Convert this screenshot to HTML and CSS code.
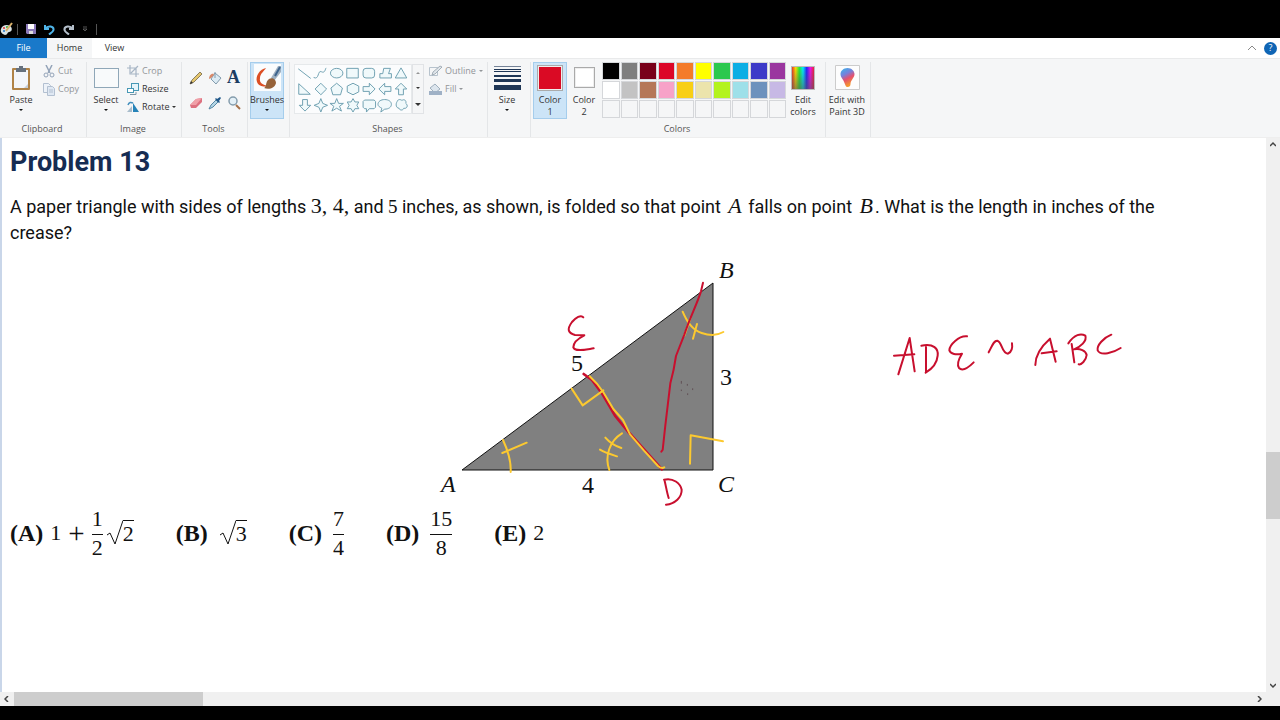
FILE: index.html
```html
<!DOCTYPE html>
<html lang="en">
<head>
    <meta charset="UTF-8">
    <meta name="viewport" content="width=device-width, initial-scale=1.0">
    <title>Problem 13 - Paint</title>
    <link rel="stylesheet" href="styles.css">
</head>
<body>
<div class="app">
    <header class="title-bar">
        <svg class="app-icon" width="13" height="14" viewBox="0 0 13 14"><path d="M1 7C2 3 7 2 10 4c3 2 2 6-1 6-2 0-1 3-4 3-3-1-5-3-4-6z" fill="#d9e2e4"/><circle cx="4" cy="6" r="1" fill="#d33"/><circle cx="7" cy="5" r="1" fill="#3a3"/><circle cx="4" cy="9" r="1" fill="#27c"/><path d="M6 9l6-8" stroke="#d8b06a" stroke-width="2"/></svg>
        <span class="bar-line"></span>
        <button class="quick" aria-label="Save"><svg width="10" height="10" viewBox="0 0 10 10"><path d="M0 0h10v10H1L0 9z" fill="#8a78b8"/><path d="M2 0h6v5H2z" fill="#fff"/><path d="M3 7h4v3H3z" fill="#ddd"/></svg></button>
        <button class="quick" aria-label="Undo"><svg width="11" height="11" viewBox="0 0 11 11"><path d="M1 1v4h4M1 5C4 1 10 2 9.500 6 9 8 7 9 5 10.500" fill="none" stroke="#4fb4e8" stroke-width="2"/></svg></button>
        <button class="quick" aria-label="Redo"><svg width="11" height="11" viewBox="0 0 11 11"><path d="M10 1v4H6M10 5C7 1 1 2 1.500 6 2 8 4 9 6 10.500" fill="none" stroke="#b4bfca" stroke-width="2"/></svg></button>
        <button class="quick" aria-label="Customize toolbar"><svg width="6" height="6" viewBox="0 0 6 6"><path d="M1 1h4M1 3h4L3 5z" fill="none" stroke="#777" stroke-width=".7"/></svg></button>
        <span class="bar-line"></span>
    </header>

    <nav class="tabs">
        <button class="tab tab-file">File</button>
        <button class="tab tab-active">Home</button>
        <button class="tab">View</button>
        <button class="collapse" aria-label="Collapse ribbon"><svg width="10" height="6" viewBox="0 0 10 6"><path d="M1 5l4-4 4 4" fill="none" stroke="#888"/></svg></button>
        <button class="help" aria-label="Help">?</button>
    </nav>

    <section class="ribbon">
        <div class="group group-clipboard">
            <div class="group-body">
                <button class="big">
                    <span class="big-icon"><svg width="20" height="26" viewBox="0 0 20 26"><rect x="1" y="3" width="18" height="22" rx="1" fill="#b08347"/><rect x="3" y="5" width="14" height="18" fill="#f3f6fa"/><path d="M5 7V3h3V1h4v2h3v4z" fill="#66717d"/><path d="M13 23l4-4v4z" fill="#c6ced8"/></svg></span>
                    <span>Paste</span><i class="caret"></i>
                </button>
                <div class="stack">
                    <button class="small off"><svg width="12" height="13" viewBox="0 0 12 13"><path d="M3 0l4 8M9 0L5 8" fill="none" stroke="#93a3b8" stroke-width="1.500"/><circle cx="3" cy="10" r="2" fill="none" stroke="#93a3b8"/><circle cx="9" cy="10" r="2" fill="none" stroke="#93a3b8"/></svg>Cut</button>
                    <button class="small off"><svg width="12" height="13" viewBox="0 0 12 13"><path d="M.5.5h5l2 2v7h-7z" fill="#edf2f8" stroke="#b3c0d1"/><path d="M4.500 3.500h5l2 2v7h-7z" fill="#dfe8f3" stroke="#b3c0d1"/><path d="M6 7h4M6 9h4" stroke="#b3c0d1"/></svg>Copy</button>
                </div>
            </div>
            <div class="group-label">Clipboard</div>
        </div>

        <div class="group group-image">
            <div class="group-body">
                <button class="big">
                    <span class="big-icon"><svg width="25" height="20" viewBox="0 0 25 20"><rect x=".5" y=".5" width="24" height="19" fill="#f8fafb" stroke="#8fa7b8"/></svg></span>
                    <span>Select</span><i class="caret"></i>
                </button>
                <div class="stack">
                    <button class="small off"><svg width="12" height="12" viewBox="0 0 12 12"><path d="M3 0v9h9M0 3h9v9M4 8l7-7" fill="none" stroke="#a7b5c5" stroke-width="1.200"/></svg>Crop</button>
                    <button class="small"><svg width="12" height="12" viewBox="0 0 12 12"><rect x="4.500" y=".5" width="7" height="7" fill="#e6f4fa" stroke="#4798b5"/><rect x=".5" y="5.500" width="6" height="4" fill="#fff" stroke="#4798b5"/><path d="M3 11.500h6V9" fill="none" stroke="#7e98a8"/></svg>Resize</button>
                    <button class="small"><svg width="12" height="12" viewBox="0 0 12 12"><path d="M0 11l5-6v6z" fill="#a9bdcc"/><path d="M6 2l6 9H6z" fill="#2683b8"/><path d="M1 4c1-3 3-3 5-2" fill="none" stroke="#448fbd" stroke-width="1.500"/></svg>Rotate <i class="caret"></i></button>
                </div>
            </div>
            <div class="group-label">Image</div>
        </div>

        <div class="group group-tools">
            <div class="group-body">
                <div class="tool-grid">
                    <button aria-label="Pencil"><svg width="14" height="14" viewBox="0 0 14 14"><path d="M1 13l2-4 8-8 2 2-8 8z" fill="#e4c66d" stroke="#746647" stroke-width=".8"/><path d="M1 13l1-3 2 2z" fill="#333"/></svg></button>
                    <button aria-label="Fill with color"><svg width="14" height="14" viewBox="0 0 14 14"><path d="M7 2l6 5-5 6-5-5z" fill="#dcebf4" stroke="#829bad"/><path d="M7 7V1" stroke="#829bad"/><path d="M6 3C3 2 1 5 1 8l2-1 2-2z" fill="#d9896a"/></svg></button>
                    <button class="tool-text" aria-label="Text">A</button>
                    <button aria-label="Eraser"><svg width="14" height="14" viewBox="0 0 14 14"><path d="M1 9l6-6 6-1v4l-6 6H2z" fill="#dd7180"/><path d="M1 9l6-6 6-1-6 7z" fill="#f0a0a8"/></svg></button>
                    <button aria-label="Color picker"><svg width="14" height="14" viewBox="0 0 14 14"><path d="M1 13l2-4 5-5 2 2-5 5z" fill="#b4d5e5" stroke="#5688a5"/><path d="M7 3l4 4 1-1-1-1 2-3-1-1-3 2-1-1z" fill="#21588a"/></svg></button>
                    <button aria-label="Magnifier"><svg width="14" height="14" viewBox="0 0 14 14"><circle cx="6" cy="5" r="4" fill="#e4f0f7" stroke="#849cac" stroke-width="1.500"/><path d="M9 9l4 4" stroke="#a5714a" stroke-width="2"/></svg></button>
                </div>
            </div>
            <div class="group-label">Tools</div>
        </div>

        <div class="group group-brushes">
            <div class="group-body">
                <button class="big picked">
                    <span class="big-icon"><svg width="27" height="27" viewBox="0 0 27 27"><path d="M0 0h27v27H0z" fill="#fafcfd"/><path d="M12 4C6 5 1 12 3 18c2 5 8 5 11 4-5-1-9-3-8-8 0-4 4-7 6-10z" fill="#dc4f25"/><path d="M17 14L24 2h3v6l-7 9z" fill="#9eb0c1"/><path d="M21 12l5-9" stroke="#3d648d" stroke-width="2"/><path d="M10 24c3-1 1-6 5-9 3-2 7 0 7 4-1 5-7 7-12 5z" fill="#96633a"/></svg></span>
                    <span>Brushes</span><i class="caret"></i>
                </button>
            </div>
        </div>

        <div class="group group-shapes">
            <div class="group-body">
                <svg class="gallery" width="118" height="50" viewBox="0 0 118 50" role="img" aria-label="Shapes gallery">
                    <g fill="#f0f9fb" stroke="#6d9fb0">
                        <path d="M2 4l13 10"/>
                        <path d="M18 13c6 3 4-8 8-6s4-3 5-4" fill="none"/>
                        <ellipse cx="42" cy="8.500" rx="6.500" ry="5"/>
                        <path d="M52.500 3.500h12v10h-12z"/>
                        <rect x="69.500" y="3.500" width="12" height="10" rx="3"/>
                        <path d="M87 13.500V9h3l1-5.500h7L96 9h3v4.500z"/>
                        <path d="M109 3l6 10.500h-12z"/>
                        <path d="M2.500 19.500v11h12z"/>
                        <path d="M25.500 19l6 6-6 6-6-6z"/>
                        <path d="M42 19l6 5-2 7h-8l-2-7z"/>
                        <path d="M59 19l6 3v6l-6 3-6-3v-6z"/>
                        <path d="M69.500 22.500H76V19l6 6-6 6v-3.500h-6.500z"/>
                        <path d="M98.500 22.500H92V19l-6 6 6 6v-3.500h6.500z"/>
                        <path d="M106.500 31v-6H103l6-6 6 6h-3.500v6z"/>
                        <path d="M6.500 36v6H3l6 6 6-6h-3.500v-6z"/>
                        <path d="M25.500 35l2 5 5 2-5 2-2 5-2-5-5-2 5-2z"/>
                        <path d="M42 35l2 5h5l-4 3 2 5-5-3-5 3 2-5-4-3h5z"/>
                        <path d="M59 35l2 3.500h4L63 42l2 3.500h-4L59 49l-2-3.500h-4l2-3.500-2-3.500h4z"/>
                        <path d="M71 36.500h10l1.500 1.500v6L81 45.500h-5L73 49v-3.500h-2L69.500 44v-6z"/>
                        <path d="M89 45l-1 4 4-3c4 0 7-2 7-5s-3-5-7-5-7 2-7 5c0 2 2 3 4 4z"/>
                        <path d="M105 38c1-3 4-2 5-1 2-2 5 0 4 3 3 2 1 6-2 5-1 3-5 2-5 0-3 0-4-4-2-7z"/>
                    </g>
                </svg>
                <div class="gallery-scroll">
                    <button aria-label="Previous row"><i class="caret caret-up"></i></button>
                    <button aria-label="Next row"><i class="caret"></i></button>
                    <button aria-label="More shapes"><i class="caret caret-more"></i></button>
                </div>
                <div class="stack">
                    <button class="small off"><svg width="13" height="12" viewBox="0 0 13 12"><path d="M.5 2.500h8v8h-8z" fill="none" stroke="#b7c3cd"/><path d="M3 10l1-3 7-6 2 1-7 7z" fill="#dfe5ea" stroke="#93a0aa" stroke-width=".8"/></svg>Outline <i class="caret"></i></button>
                    <button class="small off"><svg width="13" height="12" viewBox="0 0 13 12"><path d="M1 5l5-4 5 5-5 4z" fill="#dce5ed" stroke="#9fafbd"/><path d="M0 8h13v4H0z" fill="#9fb1c6"/></svg>Fill <i class="caret"></i></button>
                </div>
            </div>
            <div class="group-label">Shapes</div>
        </div>

        <div class="group group-size">
            <div class="group-body">
                <button class="big">
                    <span class="big-icon"><svg width="27" height="24" viewBox="0 0 27 24" fill="#1e3656"><path d="M0 0h27v1H0z" opacity=".6"/><path d="M0 3h27v1H0zM0 5h27v1H0zM0 9h27v2H0zM0 13h27v3H0zM0 19h27v5H0z"/></svg></span>
                    <span>Size</span><i class="caret"></i>
                </button>
            </div>
        </div>

        <div class="group group-colors">
            <div class="group-body">
                <button class="big picked"><span class="big-icon"><span class="swatch swatch-one"></span></span><span>Color<br>1</span></button>
                <button class="big"><span class="big-icon"><span class="swatch swatch-two"></span></span><span>Color<br>2</span></button>
                <div class="palette">
                    <button class="black" aria-label="Black"></button>
                    <button class="gray" aria-label="Gray"></button>
                    <button class="dark-red" aria-label="Dark red"></button>
                    <button class="red" aria-label="Red"></button>
                    <button class="orange" aria-label="Orange"></button>
                    <button class="yellow" aria-label="Yellow"></button>
                    <button class="green" aria-label="Green"></button>
                    <button class="turquoise" aria-label="Turquoise"></button>
                    <button class="indigo" aria-label="Indigo"></button>
                    <button class="purple" aria-label="Purple"></button>
                    <button class="white" aria-label="White"></button>
                    <button class="light-gray" aria-label="Light gray"></button>
                    <button class="brown" aria-label="Brown"></button>
                    <button class="rose" aria-label="Rose"></button>
                    <button class="gold" aria-label="Gold"></button>
                    <button class="light-yellow" aria-label="Light yellow"></button>
                    <button class="lime" aria-label="Lime"></button>
                    <button class="light-turquoise" aria-label="Light turquoise"></button>
                    <button class="blue-gray" aria-label="Blue gray"></button>
                    <button class="lavender" aria-label="Lavender"></button>
                    <button aria-label="Empty 1"></button>
                    <button aria-label="Empty 2"></button>
                    <button aria-label="Empty 3"></button>
                    <button aria-label="Empty 4"></button>
                    <button aria-label="Empty 5"></button>
                    <button aria-label="Empty 6"></button>
                    <button aria-label="Empty 7"></button>
                    <button aria-label="Empty 8"></button>
                    <button aria-label="Empty 9"></button>
                    <button aria-label="Empty 10"></button>
                </div>
                <button class="big"><span class="big-icon"><span class="rainbow"></span></span><span>Edit<br>colors</span></button>
            </div>
            <div class="group-label">Colors</div>
        </div>

        <div class="group group-3d">
            <div class="group-body">
                <button class="big">
                    <span class="big-icon"><svg width="25" height="25" viewBox="0 0 25 25"><defs><linearGradient id="drop" x2=".4" y2="1"><stop offset="0" stop-color="#35b8ec"/><stop offset=".4" stop-color="#7680dc"/><stop offset=".65" stop-color="#e55070"/><stop offset="1" stop-color="#f59a2c"/></linearGradient></defs><path d="M.5.5h24v24H.5z" fill="#fdfdfd" stroke="#ccc"/><path d="M12.500 3c4 0 7 3 7 6 0 4-4 6-4 10 0 2-1 3-3 3s-2-2-3-4c-1-4-4-5-4-9 0-3 3-6 7-6z" fill="url(#drop)"/></svg></span>
                    <span>Edit with<br>Paint 3D</span>
                </button>
            </div>
        </div>
    </section>

    <main class="workspace">
        <article class="page">
            <h1>Problem 13</h1>
            <p class="question">A paper triangle with sides of lengths <span class="num">3, 4,</span> and <span class="num num-small">5</span> inches, as shown, is folded so that point <em>A</em> falls on point <em>B</em>. What is the length in inches of the crease?</p>

            <svg class="figure" width="710" height="260" viewBox="0 0 710 260" role="img" aria-label="Right triangle ABC with pen marks">
                <path d="M33 220L284 33v187z" fill="#808080" stroke="#111"/>
                <g class="figure-text">
                    <text x="12" y="242" class="vertex">A</text>
                    <text x="290" y="28" class="vertex">B</text>
                    <text x="289" y="242" class="vertex">C</text>
                    <text x="142" y="121">5</text>
                    <text x="291" y="135">3</text>
                    <text x="153" y="243">4</text>
                </g>
                <!-- pen strokes, three units to a pixel -->
                <g transform="scale(.33333)" fill="none" stroke-linecap="round" stroke-linejoin="round">
                    <g class="pen-red">
                        <path d="M463 202C456 193 440 203 429 216C412 239 418 249 438 255L466 256C442 268 433 282 433 292C438 306 467 299 494 295"/>
                        <path d="M707 693C711 709 714 729 719 744M705 689C733 682 754 701 758 719C759 742 738 761 711 764"/>
                        <path d="M464 372L489 390L519 430L558 497L598 546L635 587L699 658" stroke-width="8"/>
                    </g>
                    <g class="pen-yellow">
                        <path d="M482 379C502 397 511 408 523 427L553 477L582 510L603 553L645 602L687 648Q699 658 706 652"/>
                        <path d="M428 416L461 466L523 421"/>
                        <path d="M222 570C236 600 247 629 245 666M220 609L293 578"/>
                        <path d="M579 550C542 572 526 619 541 660M529 563C544 580 557 588 577 594M513 599C530 609 545 613 564 619"/>
                        <path d="M761 185C773 214 788 240 818 249C842 257 866 256 883 246M784 205L766 257M804 222L792 266"/>
                        <path d="M783 641L785 556L882 574"/>
                    </g>
                    <g class="pen-red">
                        <path d="M822 98L816 124C803 165 781 206 766 254L741 318C738 339 734 364 724 400L709 526L701 600L697 605"/>
                    </g>
                    <g class="pen-red" transform="translate(1350 210)">
                        <path d="M58 163L92 54L107 154M45 107L106 103"/>
                        <path d="M141 80L141 157M127 77C164 69 179 87 176 107C174 131 157 148 140 158"/>
                        <path d="M264 49C240 46 211 75 211 91C214 103 233 105 249 101C239 117 232 132 240 144C250 154 268 143 284 127"/>
                        <path d="M329 97C340 76 345 61 355 62C370 66 367 99 387 101C397 96 401 83 399 70"/>
                        <path d="M469 135C469 108 488 78 513 56L530 125M488 100L533 94"/>
                        <path d="M578 72L586 127M568 70C586 43 606 39 619 47C625 63 604 81 585 88C603 84 621 93 623 105C621 122 607 135 599 133"/>
                        <path d="M697 44C674 53 653 76 656 91C665 109 704 98 725 84"/>
                    </g>
                    <path d="M757 394v6M757 420v2M775 403v3M776 431v3M791 416v3" stroke="#5f5055" stroke-width="3"/>
                </g>
            </svg>

            <ul class="choices">
                <li><b>(A)</b><span>1</span><span class="plus">+</span><span class="fraction"><span>1</span><span>2</span></span><span class="root"><svg width="17" height="26" viewBox="0 0 17 26"><path d="M1 15l3-2 5 11 8-23.500" fill="none" stroke="#111"/></svg><span>2</span></span></li>
                <li><b>(B)</b><span class="root root-lone"><svg width="17" height="26" viewBox="0 0 17 26"><path d="M1 15l3-2 5 11 8-23.500" fill="none" stroke="#111"/></svg><span>3</span></span></li>
                <li><b>(C)</b><span class="fraction fraction-lone"><span>7</span><span>4</span></span></li>
                <li><b>(D)</b><span class="fraction fraction-lone"><span>15</span><span>8</span></span></li>
                <li><b>(E)</b><span>2</span></li>
            </ul>
        </article>

        <div class="scroll-y">
            <button aria-label="Scroll up"><svg width="6" height="6" viewBox="0 0 6 6"><path d="M0 5l3-3 3 3" fill="none" stroke="#444" stroke-width="1.500"/></svg></button>
            <span class="thumb"></span>
            <button class="scroll-last" aria-label="Scroll down"><svg width="6" height="6" viewBox="0 0 6 6"><path d="M0 1l3 3 3-3" fill="none" stroke="#444" stroke-width="1.500"/></svg></button>
        </div>
        <div class="scroll-x">
            <button aria-label="Scroll left"><svg width="6" height="6" viewBox="0 0 6 6"><path d="M4 0L1 3l3 3" fill="none" stroke="#444" stroke-width="1.500"/></svg></button>
            <span class="thumb"></span>
            <button class="scroll-last" aria-label="Scroll right"><svg width="6" height="6" viewBox="0 0 6 6"><path d="M2 0l3 3-3 3" fill="none" stroke="#444" stroke-width="1.500"/></svg></button>
        </div>
    </main>
</div>
</body>
</html>
```
FILE: styles.css
```css
* {
    box-sizing: border-box;
}

body {
    margin: 0;
    background: #000;
    color: #333;
    font-family: "Open Sans", "Noto Sans", sans-serif;
    font-size: 9px;
    line-height: 12px;
}

button {
    padding: 0;
    border: 0;
    background: none;
    color: inherit;
    font: inherit;
}

svg {
    display: block;
    flex: none;
}

.app {
    display: flex;
    flex-direction: column;
    min-height: 100vh;
    padding-bottom: 14px;
}

/* Title bar */
.title-bar {
    display: flex;
    align-items: center;
    gap: 8px;
    height: 38px;
    padding-top: 20px;
}

.title-bar .app-icon {
    margin-right: -4px;
}

.bar-line {
    width: 1px;
    height: 11px;
    background: #555;
}

/* Tabs */
.tabs {
    display: flex;
    align-items: center;
    height: 20px;
    padding-right: 3px;
    background: #fff;
}

.tab {
    width: 45px;
    height: 100%;
}

.tab-file {
    width: 47px;
    background: #1979ca;
    color: #fff;
}

.tab-active {
    background: #f5f6f7;
}

.collapse {
    margin-left: auto;
    margin-right: 7px;
}

.help {
    width: 13px;
    height: 13px;
    border-radius: 50%;
    background: #0f65b5;
    color: #fff;
}

/* Ribbon */
.ribbon {
    display: flex;
    height: 80px;
    padding-top: 3px;
    border-top: 1px solid #e9eaeb;
    border-bottom: 1px solid #eee;
    background: #f5f6f7;
}

.group {
    display: flex;
    flex-direction: column;
    border-right: 1px solid #e4e6e8;
}

.group-clipboard { width: 87px; }
.group-image { width: 95px; }
.group-tools { width: 66px; }
.group-brushes { width: 42px; }
.group-shapes { width: 198px; }
.group-size { width: 43px; }
.group-colors { width: 295px; }
.group-3d { width: 45px; }

.group-body {
    display: flex;
    height: 57px;
    padding-left: 2px;
}

.group-clipboard .group-body,
.group-shapes .group-body,
.group-3d .group-body {
    padding-left: 4px;
}

.group-label {
    margin-top: 4px;
    padding-right: 2px;
    text-align: center;
    color: #555;
}

.big {
    display: flex;
    flex-direction: column;
    align-items: center;
    width: 34px;
    height: 57px;
    white-space: nowrap;
}

.big-icon {
    display: flex;
    align-items: center;
    justify-content: center;
    height: 29px;
    margin: 1px 0 2px;
}

.picked {
    border: 1px solid #a5cdec;
    background: #cce4f7;
}

.picked .big-icon {
    margin-top: 0;
}

.caret {
    display: inline-block;
    margin: 3px 0 0;
    border: 2px solid transparent;
    border-top-color: currentColor;
    border-bottom: 0;
}

.big .caret {
    color: #111;
}

.stack {
    display: flex;
    flex-direction: column;
}

.small {
    display: flex;
    align-items: center;
    gap: 3px;
    height: 18px;
    white-space: nowrap;
}

.small .caret {
    margin: 0;
}

.group-clipboard .stack,
.group-shapes .stack {
    margin-left: 5px;
}

.group-image .stack {
    margin-left: 4px;
}

.off {
    color: #929599;
}

.tool-grid {
    display: grid;
    grid-template-columns: repeat(3, 19px);
    grid-template-rows: repeat(2, 25px);
    margin: 3px 0 0 2px;
}

.tool-grid button {
    display: flex;
    align-items: center;
    justify-content: center;
}

.tool-grid .tool-text {
    color: #1b3c62;
    font: bold 18px "Liberation Serif", serif;
}

.gallery {
    margin-top: 2px;
    border: 1px solid #e6e9eb;
    background: #fbfcfd;
}

.gallery-scroll {
    display: grid;
    width: 12px;
    height: 50px;
    margin-top: 2px;
    border: 1px solid #e1e3e6;
    color: #333;
}

.gallery-scroll button {
    display: flex;
    align-items: center;
    justify-content: center;
}

.gallery-scroll .caret {
    margin: 0;
}

.caret-up {
    opacity: 0.5;
    transform: rotate(180deg);
}

.gallery-scroll .caret-more {
    border-width: 3px 3px 0;
}

/* Colors */
.swatch {
    width: 26px;
    height: 26px;
    border: 1px solid #aaa;
    box-shadow: inset 0 0 0 1px #eee;
    background: #da0a24;
}

.swatch-two {
    width: 21px;
    height: 21px;
    background: #fff;
}

.palette {
    display: grid;
    grid-template-columns: repeat(10, 1fr);
    gap: 1px;
    width: 184px;
    height: 56px;
    margin-left: 1px;
}

.palette button {
    border: 1px solid #d5d7da;
}

.palette .black { background: #000; }
.palette .gray { background: #7f7f7f; }
.palette .dark-red { background: #79001a; }
.palette .red { background: #dc0628; }
.palette .orange { background: #f47b2a; }
.palette .yellow { background: #ff0; }
.palette .green { background: #2bc84e; }
.palette .turquoise { background: #0caee4; }
.palette .indigo { background: #3d3ac8; }
.palette .purple { background: #9a369f; }
.palette .white { background: #fff; }
.palette .light-gray { background: #c3c3c3; }
.palette .brown { background: #b57757; }
.palette .rose { background: #f7a2c8; }
.palette .gold { background: #f8cf15; }
.palette .light-yellow { background: #ece4ac; }
.palette .lime { background: #b3f31f; }
.palette .light-turquoise { background: #9ee0e9; }
.palette .blue-gray { background: #6d92bd; }
.palette .lavender { background: #c7b9e5; }

.rainbow {
    width: 24px;
    height: 24px;
    border: 1px solid #bbb;
    background: linear-gradient(transparent, #5559), linear-gradient(90deg, #e32, #fd0, #2e3, #0ef, #22f, #e1e, #e23);
}

/* Drawing area */
.workspace {
    flex: 1;
    display: grid;
    grid-template-columns: 1fr 14px;
    grid-template-rows: 1fr 14px;
    background: #f0f0f0;
}

.page {
    padding: 6px 80px 0 8px;
    border-left: 2px solid #c9d6e9;
    background: #fff;
    color: #111;
}

.page h1 {
    margin: 0 0 14px;
    color: #162c52;
    font: bold 27px/36px Roboto, sans-serif;
}

.question {
    margin: 0;
    font: 18px/26px Roboto, sans-serif;
}

.num,
.question em {
    font-family: "Liberation Serif", serif;
    font-size: 22px;
    line-height: 20px;
}

.question em {
    margin: 0 2px 0 3px;
}

.question .num-small {
    font-size: 19px;
}

.figure {
    margin: 4px 0 0 419px;
}

.figure-text {
    fill: #111;
    font: 24px "Liberation Serif", serif;
}

.vertex {
    font-style: italic;
}

.pen-red {
    stroke: #c80f2e;
    stroke-width: 6px;
}

.pen-yellow {
    stroke: #fcc92f;
    stroke-width: 6px;
}

.choices {
    display: flex;
    gap: 42px;
    height: 46px;
    margin: 0;
    padding: 0;
    list-style: none;
    font: 22px/26px "Liberation Serif", serif;
}

.choices li {
    display: flex;
    align-items: center;
    gap: 7px;
}

.choices b {
    font-size: 24px;
}

.plus {
    font-size: 29px;
}

.fraction {
    display: flex;
    flex-direction: column;
    text-align: center;
}

.fraction span:first-child {
    padding-bottom: 2px;
    border-bottom: 1px solid #111;
}

.fraction-lone,
.root-lone {
    margin-left: 4px;
}

.root {
    display: flex;
}

.root span {
    border-top: 1px solid #111;
    line-height: 25px;
}

.fraction + .root {
    margin-left: -4px;
}

/* Scroll bars */
.scroll-y,
.scroll-x {
    display: grid;
    background: #f0f0f0;
}

.scroll-y {
    grid-template-rows: 12px 302fr 67fr 161fr 12px;
}

.scroll-x {
    grid-template-columns: 14px 189fr 1049fr 14px;
}

.scroll-y button,
.scroll-x button {
    display: flex;
    align-items: center;
    justify-content: center;
}

.scroll-y .thumb {
    grid-row: 3;
}

.scroll-y .scroll-last {
    grid-row: 5;
}

.scroll-x .scroll-last {
    grid-column: 4;
}

.thumb {
    background: #cdcdcd;
}
```
